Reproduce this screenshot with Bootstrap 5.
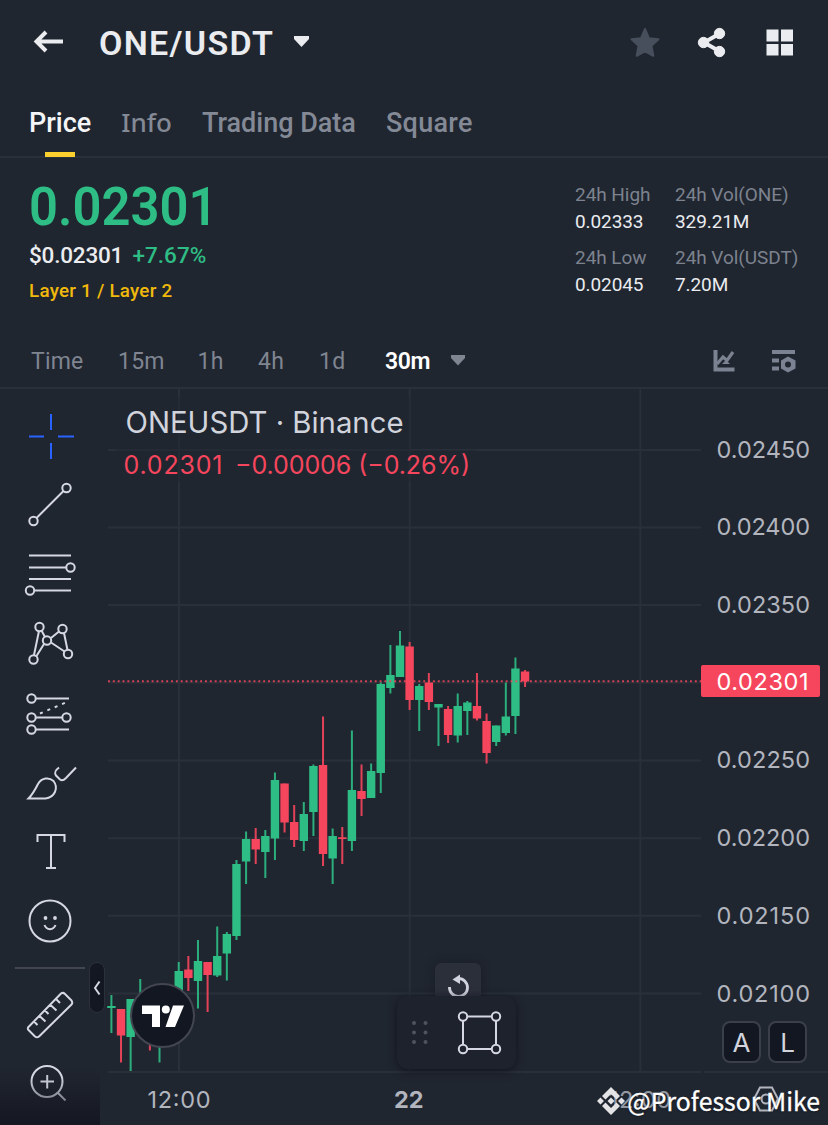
<!DOCTYPE html>
<html lang="en">
<head>
<meta charset="utf-8">
<meta name="viewport" content="width=device-width, initial-scale=1">
<title>ONE/USDT</title>
<link href="https://cdn.jsdelivr.net/npm/bootstrap@5.3.0/dist/css/bootstrap.min.css" rel="stylesheet">
<style>
  body { background: #202630; color: #eaecef; font-family: Roboto, "Noto Sans", sans-serif; width: 828px; height: 1125px; overflow: hidden; line-height: 1; }
  svg { display: block; flex: none; }
  .topbar { height: 84px; padding: 0 34px 0 33px; }
  .pair { font-size: 34px; font-weight: 600; letter-spacing: 1.3px; margin: 2px 0 0 36px; }
  .tabs { height: 74px; padding: 0 29px; gap: 30px; border-bottom: 2px solid #2a3039; font-size: 27px; font-weight: 500; color: #848996; }
  .tabs .tab-item { height: 74px; padding-top: 26px; white-space: nowrap; }
  .tabs .current { color: #f4f5f7; position: relative; }
  .tabs .current::after { content: ""; position: absolute; left: 16px; bottom: 1px; width: 30px; height: 5px; background: #fcd02f; }
  .tabs .wider { letter-spacing: .3px; }
  .tabs .serif-i { font-family: "Noto Sans", sans-serif; font-size: 26px; padding-top: 25px; }
  .summary { height: 177px; padding: 22px 28px 0 29px; }
  .last { font-size: 54px; font-weight: 600; color: #2ebd85; width: max-content; transform: scaleX(.94); transform-origin: 0 0; }
  .fiat { font-size: 22.5px; font-weight: 500; letter-spacing: -.2px; margin-top: 10px; }
  .up { color: #2ebd85; margin-left: 4px; letter-spacing: 0; }
  .zone { font-size: 18.8px; font-weight: 500; color: #f0b90b; letter-spacing: .25px; margin-top: 15px; }
  .stats { display: grid; grid-template-columns: 100px 125px; grid-auto-rows: 63.4px; width: 225px; padding-top: 5px; font-size: 19px; white-space: nowrap; }
  .stats .k { color: #7c828e; letter-spacing: -.05px; }
  .stats .v { margin-top: 8px; letter-spacing: -.1px; }
  .intervals { height: 54px; border-bottom: 2px solid #2a3039; padding: 0 30px 0 31px; font-size: 23px; color: #7f8591; letter-spacing: .2px; }
  .intervals .iv { flex: none; padding-top: 1px; }
  .intervals .picked { color: #fff; font-weight: 600; letter-spacing: -.4px; }
  .workspace { height: 736px; position: relative; }
  .tools { width: 100px; height: 736px; background: linear-gradient(to bottom, transparent 92%, #151722 100%); }
  .tools svg, .ico { fill: none; stroke: #d5d8e2; stroke-width: 2; }
  .collapse-tab { position: absolute; left: 89px; top: 573px; width: 16px; height: 51px; border-radius: 8px; background: #131722; border: 1px solid #2c303a; }
  .reset { position: absolute; left: 435px; top: 574px; width: 46px; height: 46px; border-radius: 6px; background: #2b2f3a; box-shadow: 0 0 8px rgba(15,17,28,.5); }
  .float-bar { position: absolute; left: 397px; top: 607px; width: 119px; height: 73px; border-radius: 11px; background: #1e222d; box-shadow: 0 2px 10px rgba(12,14,24,.75); }
  .tv { position: absolute; left: 130px; top: 594px; width: 65px; height: 65px; border-radius: 50%; background: #131722; border: 2px solid #434651; }
  .scale-btn { position: absolute; top: 632px; width: 39px; height: 42px; border: 2px solid #3b3f4a; border-radius: 8px; background: #131722; color: #d1d4dc; font: 26px Inter, sans-serif; }
  .watermark { position: absolute; right: 8px; bottom: 7px; font: 400 24.8px/36px "Noto Sans CJK SC", sans-serif; letter-spacing: .03px; color: #fff; -webkit-text-stroke: .3px #fff; text-shadow: 0 1px 2px rgba(0,0,0,.5); }
  .plot text { font-family: Inter, sans-serif; }
</style>
</head>
<body>
<header class="topbar d-flex align-items-center">
  <svg width="30" height="24" viewBox="0 0 30 24" fill="none" stroke="#eaecef" stroke-width="4"><path d="M30 11.500H4M13 2L3.500 11.500 13 21"/></svg>
  <span class="pair">ONE/USDT</span>
  <svg class="ms-3" width="24" height="16" viewBox="0 0 24 16" fill="#eaecef"><path d="M4 2h15v3l-7.500 8L4 5z"/></svg>
  <div class="ms-auto d-flex align-items-center">
    <svg width="32" height="32" viewBox="628 26 32 32" fill="#474f5c" stroke="#474f5c" stroke-width="2" stroke-linejoin="round"><path d="M645 29l4 9.300 9.500 1-7 6.500 1.800 10-8.300-4.500-8.300 4.500 1.800-10-7-6.500 9.500-1z"/></svg>
    <svg style="margin-left:36px" width="30" height="32" viewBox="696 26 30 32" fill="#eaecef" stroke="#eaecef"><path d="M719 34l-15 8.500 15 8.500" fill="none" stroke-width="4"/><circle cx="719.500" cy="33.500" r="5.200"/><circle cx="703.500" cy="42.500" r="5.200"/><circle cx="719.500" cy="51.500" r="5.200"/></svg>
    <svg style="margin-left:39px" width="29" height="32" viewBox="765.500 26 29 32" fill="#eaecef"><path d="M767 29.500h12v12h-12zM781.500 29.500h12v12h-12zM767 44h12v11.500h-12zM781.500 44h12v11.500h-12z"/></svg>
  </div>
</header>

<nav class="tabs d-flex">
  <div class="tab-item current">Price</div>
  <div class="tab-item serif-i">Info</div>
  <div class="tab-item">Trading Data</div>
  <div class="tab-item wider">Square</div>
</nav>

<section class="summary d-flex justify-content-between">
  <div>
    <div class="last">0.02301</div>
    <div class="fiat">$0.02301 <span class="up">+7.67%</span></div>
    <div class="zone">Layer 1 / Layer 2</div>
  </div>
  <div class="stats">
    <div><div class="k">24h High</div><div class="v">0.02333</div></div>
    <div><div class="k">24h Vol(ONE)</div><div class="v">329.21M</div></div>
    <div><div class="k">24h Low</div><div class="v">0.02045</div></div>
    <div><div class="k">24h Vol(USDT)</div><div class="v">7.20M</div></div>
  </div>
</section>

<div class="intervals d-flex align-items-center">
  <span class="iv" style="width:87px">Time</span><span class="iv" style="width:79.500px">15m</span><span class="iv" style="width:60.500px">1h</span><span class="iv" style="width:61px">4h</span><span class="iv" style="width:66px">1d</span>
  <span class="iv picked">30m</span>
  <svg style="margin-left:20px" width="16" height="16" viewBox="0 0 16 16" fill="#7f8591"><path d="M1 2h14v3l-7 7.500L1 5z"/></svg>
  <svg class="ms-auto" width="24" height="24" viewBox="712 349 24 24"><path d="M715.500 350v19.500H734.500" fill="none" stroke="#7b8291" stroke-width="4"/><path d="M717 364l6-7 4 3.500 6-8.500" fill="none" stroke="#7b8291" stroke-width="3.200"/><path d="M722 364l4-4 4 4z" fill="#7b8291"/></svg>
  <svg style="margin-left:34px" width="28" height="26" viewBox="770 348 28 26" fill="#7b8291"><path d="M772 350h23v4h-23zM772 358.500h7v4h-7zM772 366.500h7v4h-7z"/><path fill-rule="evenodd" d="M788 356.500l7.500 4v8l-7.500 4-7-4v-8zM788 361.500a3 3 0 100 6 3 3 0 000-6z"/></svg>
</div>

<main class="workspace d-flex">
  <aside class="tools d-flex flex-column">
    <svg width="100" height="82" viewBox="0 389 100 82"><path stroke="#2962ff" d="M51 414v16M51 443v16M29 436.500h15M58 436.500h16"/></svg>
    <svg width="100" height="69" viewBox="0 471 100 69"><path d="M36.500 518L63.500 491"/><circle cx="66.500" cy="488" r="4.200"/><circle cx="33.500" cy="521" r="4.200"/></svg>
    <svg width="100" height="68" viewBox="0 540 100 68"><path d="M29 555.500h42M29 567.500h37M29 579h42M34 590.500h37"/><circle cx="70.500" cy="567.500" r="4.200"/><circle cx="30" cy="590.500" r="4.200"/></svg>
    <svg width="100" height="72" viewBox="0 608 100 72"><path d="M39 631L34 655M41.500 630.500L45 637M51 638L59 631.500M64 633L67.500 650M51 642.500L64.500 651.500M44 644L36.500 656"/><circle cx="39.500" cy="627" r="4.200"/><circle cx="62.500" cy="629" r="4.200"/><circle cx="47" cy="640.500" r="4.200"/><circle cx="68" cy="654" r="4.200"/><circle cx="33.500" cy="659.500" r="4.200"/></svg>
    <svg width="100" height="69" viewBox="0 680 100 69"><path d="M36 698.500h33M36 717.500h26M36 729.500h33"/><path stroke-dasharray="3 5" d="M40 713.500L67 702"/><circle cx="31.500" cy="698.500" r="4.200"/><circle cx="31.500" cy="717.500" r="4.200"/><circle cx="66.500" cy="717.500" r="4.200"/><circle cx="31.500" cy="729.500" r="4.200"/></svg>
    <svg width="100" height="69" viewBox="0 749 100 69"><path d="M28.500 798.500C33 794 36 788 38 784c4-6.500 11-7 15.500-3 5.500 7 1 16.500-8 17.500zM59 767.500c-4 3-5 5-3 8l4 4c2 1.500 4 .5 6-1.500L76 767.500"/></svg>
    <svg width="100" height="69" viewBox="0 818 100 69"><path d="M37.500 842v-7h27v7M51 835v33M46 868h10"/></svg>
    <svg width="100" height="69" viewBox="0 887 100 69"><circle cx="50" cy="921" r="20.500"/><circle cx="45.500" cy="918" r="1.900" fill="#d5d8e2" stroke="none"/><circle cx="55" cy="918" r="1.900" fill="#d5d8e2" stroke="none"/><path d="M44.500 925c2 5.500 9 5.500 11 0"/></svg>
    <svg width="100" height="24" viewBox="0 956 100 24"><path stroke="#434651" d="M15 968h70"/></svg>
    <svg width="100" height="70" viewBox="0 980 100 70"><path stroke-linejoin="round" d="M28 1027.500L61 993.500Q63 992 65 994L71.500 1000.500Q73 1003 71.500 1004.500L39 1036.500Q37 1038 35 1036.500L28.500 1030Q27.500 1029 28 1027.500zM34 1021.500l3.500 3.500M39.500 1016l6 5.500M45 1010.500l3.500 3.500M50.500 1005l6 5.500M56 999l4 4"/></svg>
    <svg width="100" height="75" viewBox="0 1050 100 75"><defs><linearGradient id="fade" x1="0" y1="1066" x2="0" y2="1102" gradientUnits="userSpaceOnUse"><stop offset=".3" stop-color="#d5d8e2"/><stop offset="1" stop-color="#777b86"/></linearGradient></defs><g stroke="url(#fade)"><circle cx="47" cy="1081.500" r="15.500"/><path d="M58 1093l7.500 7.500"/></g><path stroke="#c3c6d0" d="M40.500 1081.500h13.500M47.200 1075v13.500"/></svg>
  </aside>

  <svg class="plot" width="728" height="736" viewBox="100 389 728 736">
    <g id="grid" stroke="#2a3039" stroke-width="2"></g>
    <path d="M116 397H410V450H476V482H116z" fill="#202630" opacity=".5"/>
    <g id="candles"></g>
    <path d="M108 681.200H701" stroke="#f6465d" stroke-width="2" stroke-dasharray="1.900 2.950" opacity=".85"/>
    <g id="prices" fill="#b2b5be" font-size="23.500"></g>
    <rect x="701" y="665" width="119" height="32" rx="2" fill="#f6465d"/>
    <text x="716.500" y="689.500" fill="#fff" font-size="23.500" textLength="92">0.02301</text>
    <text x="125.500" y="432.500" fill="#d1d4dc" font-size="29.500" textLength="278" lengthAdjust="spacingAndGlyphs">ONEUSDT · Binance</text>
    <g fill="#f6465d" font-size="25"><text x="123.500" y="474" textLength="99">0.02301</text><text x="235" y="474" textLength="235">−0.00006 (−0.26%)</text></g>
    <g fill="#b2b5be" font-size="23.500"><text x="147.500" y="1108" textLength="63">12:00</text><text x="394" y="1108" font-weight="700" textLength="29.500">22</text><text x="609" y="1108" textLength="62" opacity=".8">12:00</text></g>
    <g fill="none" stroke="#b2b5be" stroke-width="2"><path d="M760 1087.500h12l6 11.500-6 11.500h-12l-6-11.500z"/><circle cx="766" cy="1099" r="4.500"/></g>
    <g fill="#e4e4e6"><path d="M611 1087l9 9-3.500 3.500-5.500-5.500-5.500 5.500-3.500-3.500zM611 1115l9-9-3.500-3.500-5.500 5.500-5.500-5.500-3.500 3.500zM611 1097.500l3.500 3.500-3.500 3.500-3.500-3.500zM600.500 1097.500l3.500 3.500-3.500 3.500-3.500-3.500zM621.500 1097.500l3.500 3.500-3.500 3.500-3.500-3.500z"/></g>
  </svg>

  <div class="collapse-tab d-flex align-items-center justify-content-center"><svg class="ico" width="8" height="16" viewBox="0 0 8 16"><path d="M6.500 1.500L2 8l4.500 6.500"/></svg></div>
  <div class="reset"><svg width="46" height="46" viewBox="435 963 46 46"><path d="M449.500 987a9 9 0 1 0 9-8.500" fill="none" stroke="#d1d4dc" stroke-width="2.800"/><path d="M452.500 979.500l7.500-5v9.500z" fill="#d1d4dc"/></svg></div>
  <div class="float-bar"><svg width="119" height="73" viewBox="397 996 119 73"><g fill="#50535e"><circle cx="414" cy="1023" r="2"/><circle cx="425.500" cy="1023" r="2"/><circle cx="414" cy="1032.500" r="2"/><circle cx="425.500" cy="1032.500" r="2"/><circle cx="414" cy="1042" r="2"/><circle cx="425.500" cy="1042" r="2"/></g><g class="ico"><path d="M467 1016.500h25M467 1049h25M463 1020.500v24M496 1020.500v24"/><circle cx="463" cy="1016.500" r="4.200"/><circle cx="496" cy="1016.500" r="4.200"/><circle cx="463" cy="1049" r="4.200"/><circle cx="496" cy="1049" r="4.200"/></g></svg></div>
  <div class="tv"><svg width="61" height="61" viewBox="132 985 61 61" fill="#fff"><path d="M142 1005.500h18v21.500h-8v-13h-10zM173 1005.500h11l-9 21.500h-9.500z"/><circle cx="165.800" cy="1009.500" r="4"/></svg></div>
  <div class="scale-btn d-flex align-items-center justify-content-center" style="left:722px">A</div>
  <div class="scale-btn d-flex align-items-center justify-content-center" style="left:768px">L</div>
  <div class="watermark">@Professor Mike</div>
</main>

<script src="https://cdn.jsdelivr.net/npm/bootstrap@5.3.0/dist/js/bootstrap.bundle.min.js"></script>
<script>
  // each candle: direction, high, body top, body bottom, low
  const candles = [
    ['g',995,1006,1008,1033],['r',1009,1009,1035.5,1062.5],['g',999,999,1037,1071],['g',979,1000,1020,1030],
    ['r',1000,1005,1030,1050.5],['g',1000,1010,1030,1062.5],['g',990,995,1010,1020],['g',962,971,1000,1005],
    ['r',956,969.5,978,991],['g',940,961,981,1008.5],['r',962,962,975,1012],['g',926.5,956,975.5,977],
    ['g',932,934,953.5,980.5],['g',860,864,936,940],['g',831.5,839,861.5,884],['r',828,839,849.5,864],
    ['g',830,836,852,878],['g',772.5,780,838.5,860],['r',783.5,783.5,822.5,832.5],['r',805,822,840,847],
    ['g',802,814,841,851],['g',764.5,766,812,836],['r',716.5,765,854,866],['g',828.5,836,858.5,884],
    ['r',827,837.3,839,864],['g',730.5,790,841,851],['r',764.5,791,799,816],['g',763.5,771,798,798],
    ['g',682.5,684,773,793],['g',645,675,688,693.5],['g',631,645.5,677,677],['r',642,646.5,700,710],
    ['g',684,686,700,731],['r',673,682.5,702,710],['g',704,704,707.5,746],['r',706,709,735,743],
    ['g',693.5,706,735.5,742.5],['g',701,702.5,711,735],['r',673,706,718.5,720.5],['r',713.5,721,753,763.5],
    ['g',725.5,725.5,742,746],['g',682.5,716.5,733,735.5],['g',657.5,668.5,716,734],['r',670,671.5,681.5,687]
  ];
  document.getElementById('candles').innerHTML = candles.map(([d, h, t, b, l], i) => {
    const x = 111.4 + i * 9.62, c = d === 'g' ? '#2ebd85' : '#f6465d';
    return `<g fill="${c}"><rect x="${x - 1}" y="${h}" width="2" height="${l - h}" opacity=".9"/><rect x="${x - 4.2}" y="${t}" width="8.4" height="${b - t}"/></g>`;
  }).join('');
  const levels = [['0.02450',450],['0.02400',527.5],['0.02350',605],['',682.5],['0.02250',760.5],['0.02200',838.2],['0.02150',915.8],['0.02100',993.6]];
  document.getElementById('grid').innerHTML =
    levels.map(([, y]) => `<path d="M108 ${y}H701"/>`).join('') +
    [179, 409.7, 640.3].map(x => `<path d="M${x} 389V1072"/>`).join('') + '<path d="M108 1072H701M704 1072H828"/>';
  document.getElementById('prices').innerHTML =
    levels.filter(l => l[0]).map(([t, y]) => `<text x="716.5" y="${y + 7.9}" textLength="93.5">${t}</text>`).join('');
</script>
</body>
</html>
